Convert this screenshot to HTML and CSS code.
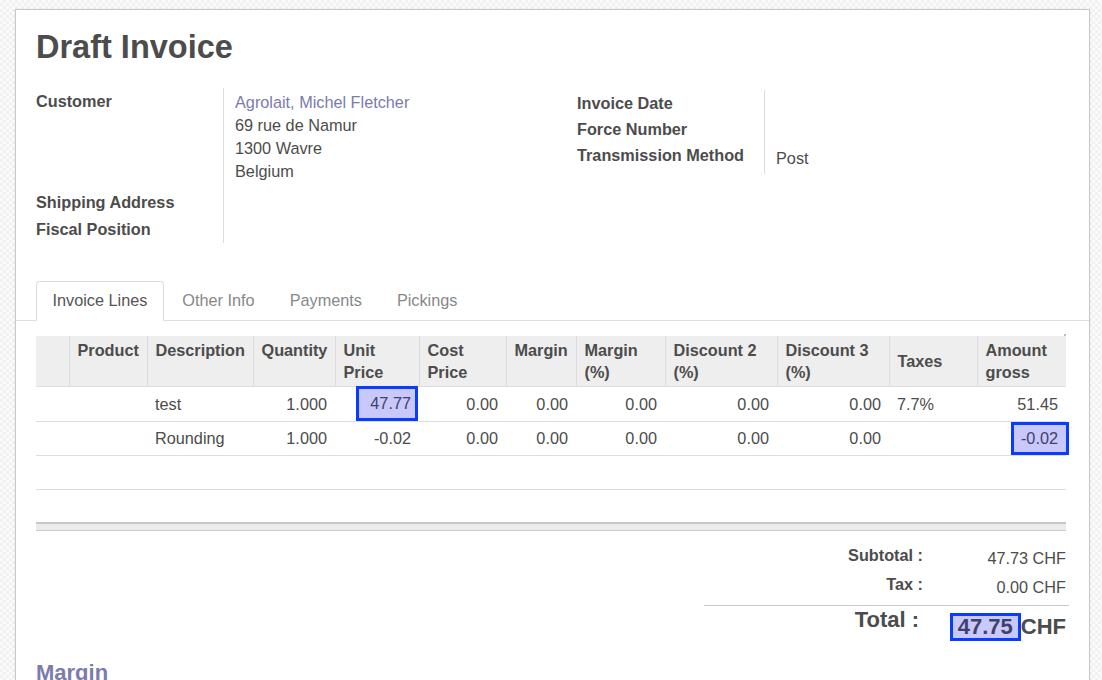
FILE: index.html
```html
<!DOCTYPE html>
<html lang="en">
<head>
<meta charset="utf-8">
<title>Draft Invoice</title>
<link rel="stylesheet" href="styles.css">
</head>
<body>
<div class="sheet">
  <h1 class="title">Draft Invoice</h1>

  <div class="groups">
    <div class="group group-left">
      <div class="lbl lbl-customer">Customer</div>
      <div class="val val-customer">
        <a class="link">Agrolait, Michel Fletcher</a>
        <div>69 rue de Namur</div>
        <div>1300 Wavre</div>
        <div>Belgium</div>
      </div>
      <div class="lbl">Shipping Address</div>
      <div class="val"></div>
      <div class="lbl">Fiscal Position</div>
      <div class="val"></div>
    </div>

    <div class="group group-right">
      <div class="lbl">Invoice Date</div>
      <div class="val"></div>
      <div class="lbl">Force Number</div>
      <div class="val"></div>
      <div class="lbl">Transmission Method</div>
      <div class="val val-post">Post</div>
    </div>
  </div>

  <ul class="tabs">
    <li class="tab active">Invoice Lines</li>
    <li class="tab">Other Info</li>
    <li class="tab">Payments</li>
    <li class="tab">Pickings</li>
  </ul>

  <div class="lines">
    <span class="resize-dot"></span>
    <table class="grid">
      <colgroup>
        <col class="c-handle">
        <col class="c-product">
        <col class="c-desc">
        <col class="c-qty">
        <col class="c-unit">
        <col class="c-cost">
        <col class="c-margin">
        <col class="c-marginp">
        <col class="c-disc2">
        <col class="c-disc3">
        <col class="c-taxes">
        <col class="c-amount">
      </colgroup>
      <thead>
        <tr>
          <th></th>
          <th>Product</th>
          <th>Description</th>
          <th>Quantity</th>
          <th>Unit<br>Price</th>
          <th>Cost<br>Price</th>
          <th>Margin</th>
          <th>Margin<br>(%)</th>
          <th>Discount 2<br>(%)</th>
          <th>Discount 3<br>(%)</th>
          <th class="mid">Taxes</th>
          <th>Amount<br>gross</th>
        </tr>
      </thead>
      <tbody>
        <tr>
          <td></td>
          <td></td>
          <td>test</td>
          <td class="num">1.000</td>
          <td class="num"><span class="hl hl-unit">47.77</span></td>
          <td class="num">0.00</td>
          <td class="num">0.00</td>
          <td class="num">0.00</td>
          <td class="num">0.00</td>
          <td class="num">0.00</td>
          <td>7.7%</td>
          <td class="num">51.45</td>
        </tr>
        <tr>
          <td></td>
          <td></td>
          <td>Rounding</td>
          <td class="num">1.000</td>
          <td class="num">-0.02</td>
          <td class="num">0.00</td>
          <td class="num">0.00</td>
          <td class="num">0.00</td>
          <td class="num">0.00</td>
          <td class="num">0.00</td>
          <td></td>
          <td class="num"><span class="hl hl-amount">-0.02</span></td>
        </tr>
        <tr class="empty">
          <td>&nbsp;</td><td></td><td></td><td></td><td></td><td></td><td></td><td></td><td></td><td></td><td></td><td></td>
        </tr>
        <tr class="empty last">
          <td>&nbsp;</td><td></td><td></td><td></td><td></td><td></td><td></td><td></td><td></td><td></td><td></td><td></td>
        </tr>
      </tbody>
      <tfoot>
        <tr>
          <td colspan="12"></td>
        </tr>
      </tfoot>
    </table>
  </div>

  <div class="totals">
    <div class="t-lbl">Subtotal :</div>
    <div class="t-val">47.73 CHF</div>
    <div class="t-lbl">Tax :</div>
    <div class="t-val">0.00 CHF</div>
    <div class="t-lbl t-total-lbl">Total :</div>
    <div class="t-val t-total-val"><span class="hl hl-total">47.75</span>CHF</div>
  </div>

  <h2 class="section">Margin</h2>
</div>
</body>
</html>
```

FILE: styles.css
```css
* {
  box-sizing: border-box;
}

html, body {
  margin: 0;
  padding: 0;
  height: 100%;
  overflow: hidden;
}

body {
  font-family: "Liberation Sans", Arial, sans-serif;
  font-size: 16.25px;
  line-height: 23px;
  color: #4c4c4c;
  background-color: #f8f8f8;
  background-image: repeating-conic-gradient(#f1f1f1 0 25%, #fbfbfb 0 50%);
  background-size: 6px 6px;
  padding: 9px 12px 0 15px;
}

.sheet {
  width: 1075px;
  min-height: 760px;
  background: #ffffff;
  border: 1px solid #c8c8cc;
  box-shadow: 0 0 2px rgba(0, 0, 0, 0.08);
  padding: 18px 23px 0 20px;
}

.title {
  margin: 0;
  font-size: 32.5px;
  line-height: 38px;
  font-weight: bold;
  color: #4c4c4c;
}

/* ---------- field groups ---------- */
.groups {
  display: grid;
  grid-template-columns: 541px 1fr;
  margin-top: 22px;
}

.group {
  display: grid;
  grid-template-columns: 188px 1fr;
  align-content: start;
}

.group-right {
  margin-top: 2px;
}

.lbl {
  font-weight: bold;
  border-right: 1px solid #dddddd;
  padding: 2px 0;
}

.group-right .lbl {
  padding: 1.5px 0;
}

.val {
  padding: 2px 0 2px 11px;
}

.val-customer {
  padding: 3px 0 6px 11px;
}

.val-post {
  padding: 4.5px 0 4.5px 11px;
}

.link {
  color: #7c7bad;
  text-decoration: none;
  display: block;
}

/* ---------- tabs ---------- */
.tabs {
  list-style: none;
  margin: 38px -23px 0 -20px;
  padding: 0 23px 0 20px;
  display: flex;
  border-bottom: 1px solid #dddddd;
}

.tab {
  padding: 7px 15.5px 8px;
  margin-right: 2px;
  margin-bottom: -1px;
  border: 1px solid transparent;
  border-radius: 4px 4px 0 0;
  color: #888888;
}

.tab.active {
  color: #555555;
  background: #ffffff;
  border-color: #dddddd #dddddd transparent;
}

/* ---------- lines table ---------- */
.lines {
  position: relative;
  margin-top: 15px;
}

.resize-dot {
  position: absolute;
  right: 0;
  top: -2px;
  width: 2px;
  height: 2px;
  background: #bdbdbd;
}

.grid {
  width: 1030px;
  table-layout: fixed;
  border-collapse: collapse;
}

.c-handle { width: 33px; }
.c-product { width: 78px; }
.c-desc { width: 106px; }
.c-qty { width: 82px; }
.c-unit { width: 84px; }
.c-cost { width: 87px; }
.c-margin { width: 70px; }
.c-marginp { width: 89px; }
.c-disc2 { width: 112px; }
.c-disc3 { width: 112px; }
.c-taxes { width: 88px; }
.c-amount { width: 89px; }

.grid th {
  background: #eeeeee;
  text-align: left;
  vertical-align: top;
  font-weight: bold;
  line-height: 22px;
  padding: 3px 8px 3px;
  border-left: 1px solid #dcdcdc;
  border-bottom: 1px solid #dddddd;
  white-space: nowrap;
  overflow: hidden;
}

.grid th:first-child {
  border-left: none;
}

.grid th.mid {
  vertical-align: middle;
}

.grid td {
  padding: 5px 8px;
  border-bottom: 1px solid #dddddd;
  white-space: nowrap;
}

.grid td.num {
  text-align: right;
}

.grid tr.empty.last td {
  border-bottom: none;
  padding-bottom: 4px;
}

.grid tfoot td {
  height: 7px;
  padding: 0;
  background: #ececec;
  border-top: 2px solid #c8c8c8;
  border-bottom: 1px solid #cccccc;
}

/* ---------- highlight boxes ---------- */
.hl {
  display: inline-block;
  background: #c8c8fa;
  border: 3px solid #0a3cff;
  color: #40406e;
}

.hl-unit {
  padding: 3px 4px 3px 11px;
  margin: -7px -7px -5px -14px;
}

.hl-amount {
  padding: 2px 8px 2px 7px;
  margin: -7px -11px -5px -10px;
}

.hl-total {
  line-height: 22px;
  padding: 0 5px 0 5px;
  margin: -6px 0 0 0;
}

/* ---------- totals ---------- */
.totals {
  width: 365px;
  margin: 11px -3px 0 auto;
  display: grid;
  grid-template-columns: 1fr 139px;
}

.t-lbl {
  font-weight: bold;
  text-align: right;
  padding: 2.5px 7px 2.5px 0;
}

.t-val {
  text-align: right;
  padding: 5.5px 3px 0 0;
}

.t-total-lbl,
.t-total-val {
  margin-top: 6px;
  border-top: 1px solid #cccccc;
  font-size: 22px;
  line-height: 28px;
  font-weight: bold;
}

.t-total-lbl {
  padding: 0 11px 0 0;
}

.t-total-val {
  padding: 7px 3px 0 0;
}

/* ---------- section ---------- */
.section {
  margin: 19px 0 0;
  font-size: 22px;
  line-height: 26px;
  font-weight: bold;
  color: #7c7bad;
}
```
